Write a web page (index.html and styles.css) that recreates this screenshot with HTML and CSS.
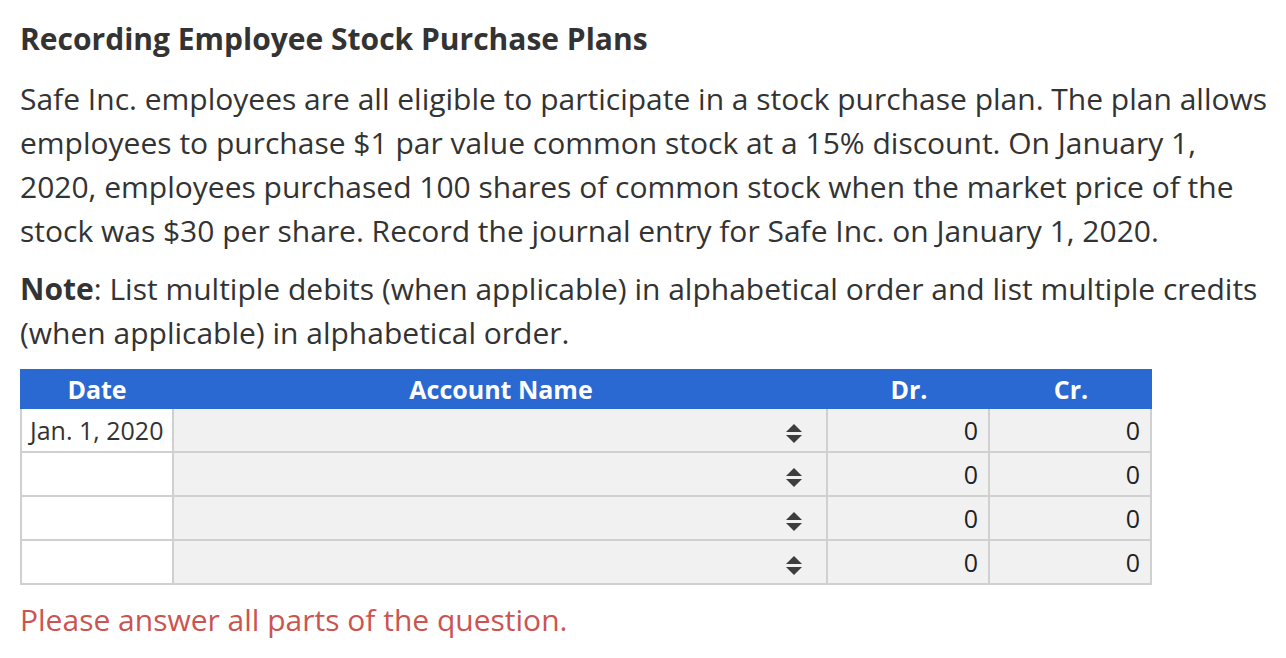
FILE: index.html
```html
<!DOCTYPE html>
<html>
<head>
<meta charset="utf-8">
<link rel="stylesheet" href="styles.css">
</head>
<body>
<div class="page">
  <h1 class="title">Recording Employee Stock Purchase Plans</h1>
  <p class="para">Safe Inc. employees are all eligible to participate in a stock purchase plan. The plan allows employees to purchase $1 par value common stock at a 15% discount. On January 1, 2020, employees purchased 100 shares of common stock when the market price of the stock was $30 per share. Record the journal entry for Safe Inc. on January 1, 2020.</p>
  <p class="para note"><b>Note</b>: List multiple debits (when applicable) in alphabetical order and list multiple credits (when applicable) in alphabetical order.</p>
  <table class="journal">
    <colgroup>
      <col class="c-date"><col class="c-acct"><col class="c-dr"><col class="c-cr">
    </colgroup>
    <thead>
      <tr><th>Date</th><th>Account Name</th><th>Dr.</th><th>Cr.</th></tr>
    </thead>
    <tbody>
      <tr><td class="date">Jan. 1, 2020</td><td class="acct"><span class="arrows"><svg width="16" height="19" viewBox="0 0 16 19"><polygon points="8,0 16,8 0,8"/><polygon points="0,11 16,11 8,19"/></svg></span></td><td class="num">0</td><td class="num">0</td></tr>
      <tr><td class="date"></td><td class="acct"><span class="arrows"><svg width="16" height="19" viewBox="0 0 16 19"><polygon points="8,0 16,8 0,8"/><polygon points="0,11 16,11 8,19"/></svg></span></td><td class="num">0</td><td class="num">0</td></tr>
      <tr><td class="date"></td><td class="acct"><span class="arrows"><svg width="16" height="19" viewBox="0 0 16 19"><polygon points="8,0 16,8 0,8"/><polygon points="0,11 16,11 8,19"/></svg></span></td><td class="num">0</td><td class="num">0</td></tr>
      <tr><td class="date"></td><td class="acct"><span class="arrows"><svg width="16" height="19" viewBox="0 0 16 19"><polygon points="8,0 16,8 0,8"/><polygon points="0,11 16,11 8,19"/></svg></span></td><td class="num">0</td><td class="num">0</td></tr>
    </tbody>
  </table>
  <p class="warning">Please answer all parts of the question.</p>
</div>
</body>
</html>
```
FILE: styles.css
```css
html, body {
  margin: 0;
  padding: 0;
  background: #fff;
}
.page {
  padding: 20px 16px 0 20px;
  font-family: "Open Sans", "Noto Sans", sans-serif;
  color: #333;
}
.title {
  margin: 0 0 19px 0;
  font-size: 30px;
  font-weight: 700;
  line-height: 38px;
  color: #333;
}
.para {
  margin: 0 0 14px 0;
  font-size: 30px;
  line-height: 44px;
}
.note {
  margin-bottom: 14px;
}
.note b {
  font-weight: 700;
}
.journal {
  border-collapse: separate;
  border-spacing: 0;
  width: 1132px;
  table-layout: fixed;
  font-size: 25px;
}
.c-date { width: 154px; }
.c-acct { width: 654px; }
.c-dr { width: 162px; }
.c-cr { width: 162px; }
.journal th {
  background: #2969d1;
  color: #fff;
  font-weight: 700;
  height: 40px;
  padding: 0;
  text-align: center;
  border: none;
}
.journal td {
  height: 42px;
  padding: 0;
  border-right: 2px solid #d0d0d0;
  border-bottom: 2px solid #d0d0d0;
  background: #f1f1f1;
}
.journal td.date {
  background: #fff;
  border-left: 2px solid #d0d0d0;
  padding-left: 8px;
  color: #333;
}
.journal td.acct {
  text-align: right;
  padding-right: 24px;
}
.arrows {
  display: inline-flex;
  vertical-align: middle;
}
.arrows svg {
  fill: #3d3d3d;
}
.journal td.num {
  text-align: right;
  padding-right: 10px;
  color: #222;
}
.warning {
  margin: 17px 0 0 0;
  font-size: 30px;
  line-height: 36px;
  color: #cc5450;
}
```
